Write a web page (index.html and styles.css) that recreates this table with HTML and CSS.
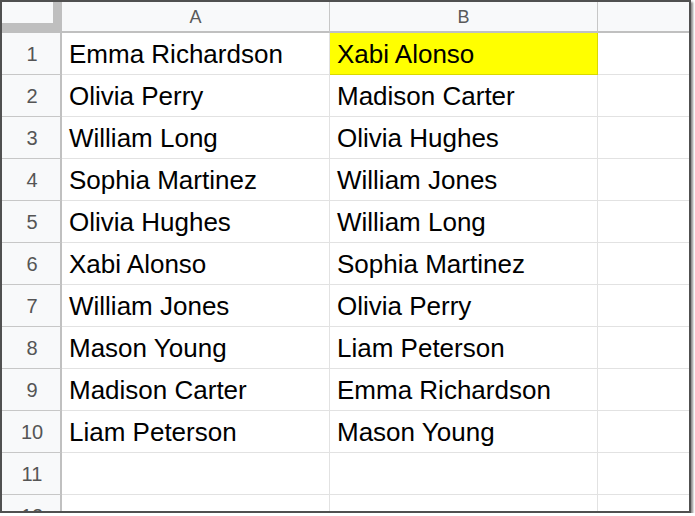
FILE: index.html
```html
<!DOCTYPE html>
<html>
<head>
<meta charset="utf-8">
<link rel="stylesheet" href="styles.css">
</head>
<body>
<div class="frame">
  <div class="sheet">
    <div class="corner"><div class="corner-fill"></div></div>
    <div class="colhead">A</div>
    <div class="colhead">B</div>
    <div class="colhead last"></div>

    <div class="rowhead">1</div><div class="cell">Emma Richardson</div><div class="cell hl">Xabi Alonso</div><div class="cell last"></div>
    <div class="rowhead">2</div><div class="cell">Olivia Perry</div><div class="cell">Madison Carter</div><div class="cell last"></div>
    <div class="rowhead">3</div><div class="cell">William Long</div><div class="cell">Olivia Hughes</div><div class="cell last"></div>
    <div class="rowhead">4</div><div class="cell">Sophia Martinez</div><div class="cell">William Jones</div><div class="cell last"></div>
    <div class="rowhead">5</div><div class="cell">Olivia Hughes</div><div class="cell">William Long</div><div class="cell last"></div>
    <div class="rowhead">6</div><div class="cell">Xabi Alonso</div><div class="cell">Sophia Martinez</div><div class="cell last"></div>
    <div class="rowhead">7</div><div class="cell">William Jones</div><div class="cell">Olivia Perry</div><div class="cell last"></div>
    <div class="rowhead">8</div><div class="cell">Mason Young</div><div class="cell">Liam Peterson</div><div class="cell last"></div>
    <div class="rowhead">9</div><div class="cell">Madison Carter</div><div class="cell">Emma Richardson</div><div class="cell last"></div>
    <div class="rowhead">10</div><div class="cell">Liam Peterson</div><div class="cell">Mason Young</div><div class="cell last"></div>
    <div class="rowhead">11</div><div class="cell"></div><div class="cell"></div><div class="cell last"></div>
    <div class="rowhead">12</div><div class="cell"></div><div class="cell"></div><div class="cell last"></div>
  </div>
</div>
</body>
</html>
```

FILE: styles.css
```css
html, body {
  margin: 0;
  padding: 0;
  background: #ffffff;
}
body {
  font-family: "Liberation Sans", Arial, sans-serif;
}
.frame {
  width: 691px;
  height: 513px;
  box-sizing: border-box;
  border: 2px solid #505050;
  box-shadow: 2px 2px 2px rgba(0, 0, 0, 0.45);
  overflow: hidden;
  background: #fff;
}
.sheet {
  display: grid;
  grid-template-columns: 60px 268px 268px 1fr;
  grid-template-rows: 31px repeat(12, 42px);
}
.corner {
  background: #bfbfbf;
  border-right: 1px solid #bfbfbf;
  border-bottom: 1px solid #bfbfbf;
  box-sizing: border-box;
}
.corner-fill {
  width: 51px;
  height: 21px;
  background: #f8f9fa;
}
.colhead {
  box-sizing: border-box;
  background: #f8f9fa;
  border-right: 1px solid #c7c7c7;
  border-bottom: 2px solid #c0c0c0;
  color: #5a5a5a;
  font-size: 18px;
  display: flex;
  align-items: center;
  justify-content: center;
  padding-top: 1px;
}
.colhead.last {
  border-right: none;
}
.rowhead {
  box-sizing: border-box;
  background: #f8f9fa;
  border-right: 2px solid #c0c0c0;
  border-bottom: 1px solid #c7c7c7;
  color: #555555;
  font-size: 20px;
  display: flex;
  align-items: center;
  justify-content: center;
  padding-left: 2px;
  padding-top: 1px;
}
.cell {
  box-sizing: border-box;
  border-right: 1px solid #e2e2e2;
  border-bottom: 1px solid #e2e2e2;
  color: #000;
  font-size: 26px;
  display: flex;
  align-items: center;
  padding-left: 7px;
  padding-top: 2px;
  white-space: nowrap;
  overflow: hidden;
}
.cell.last {
  border-right: none;
}
.cell.hl {
  background: #ffff00;
  border-right-color: #d9d900;
  border-bottom-color: #d9d900;
}
```
